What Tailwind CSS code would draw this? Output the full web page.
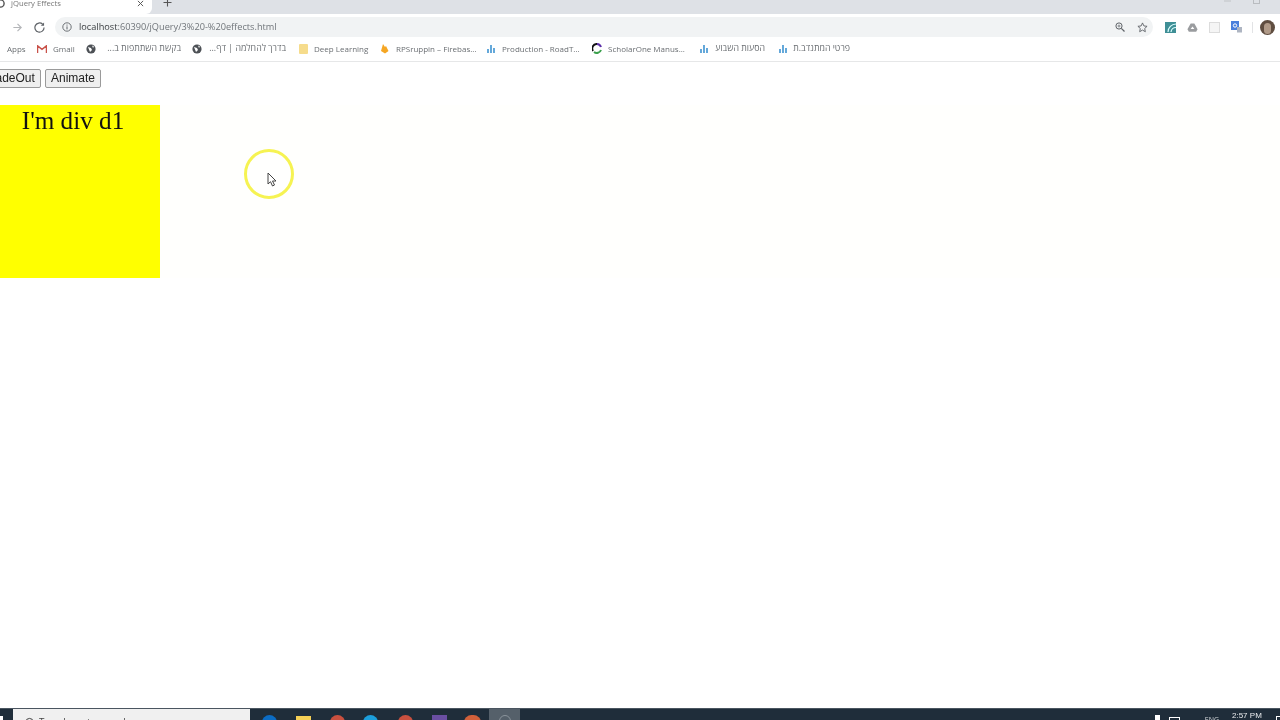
<!DOCTYPE html>
<html>
<head>
<meta charset="utf-8">
<script src="https://cdn.jsdelivr.net/npm/@tailwindcss/browser@4"></script>
</head>
<body class="bg-white">
<div class="relative w-[1280px] h-[720px] overflow-hidden flex flex-col bg-white blur-[0.35px] font-['Open_Sans','Noto_Sans',sans-serif]">

  <!-- tab strip -->
  <div class="h-[14px] shrink-0 bg-[#dee1e6] flex items-start overflow-hidden">
    <div class="w-[152px] h-[14px] bg-white rounded-br-md flex items-center relative shrink-0">
      <svg class="absolute left-[-4px] top-[-1px] w-[9px] h-[9px]" viewBox="0 0 10 10"><circle cx="5" cy="5" r="4" fill="none" stroke="#555" stroke-width="1.6"/></svg>
      <span class="ml-[11px] mt-[-8px] text-[7.7px] leading-[10px] text-[#777]">jQuery Effects</span>
      <svg class="absolute left-[137px] top-0 w-[7px] h-[7px]" viewBox="0 0 8 8"><path d="M1 1l6 6M7 1L1 7" stroke="#555" stroke-width="1.1"/></svg>
    </div>
    <svg class="ml-[11px] w-[9px] h-[9px] shrink-0 mt-[-2px]" viewBox="0 0 9 9"><path d="M4.500 0v8.500M.5 4.500h8" stroke="#555" stroke-width="1.1"/></svg>
    <div class="ml-auto flex gap-[22px] mr-[20px] items-start">
      <div class="w-[7px] h-[2px] bg-[#cfd2d6]"></div>
      <div class="w-[7px] h-[4px] border border-t-0 border-[#b9bcc0]"></div>
    </div>
  </div>

  <!-- toolbar -->
  <div class="h-[24px] shrink-0 bg-white flex items-center pt-[2px] relative">
    <svg class="ml-[12px] w-[11px] h-[11px] shrink-0" viewBox="0 0 12 12"><path d="M1.500 6H10M6 2l4 4-4 4" fill="none" stroke="#b4b6b9" stroke-width="1.3"/></svg>
    <svg class="ml-[11px] w-[11px] h-[11px] shrink-0" viewBox="0 0 12 12"><path d="M11 6A5 5 0 1 1 9.400 2.400" fill="none" stroke="#5f6368" stroke-width="1.3"/><path d="M11 .6v3.600H7.400z" fill="#5f6368"/></svg>
    <div class="ml-[10px] w-[1098px] h-[20px] rounded-full bg-[#f1f3f4] flex items-center shrink-0">
      <svg class="ml-[7px] w-[10px] h-[10px] shrink-0" viewBox="0 0 10 10"><circle cx="5" cy="5" r="4.200" fill="none" stroke="#5f6368" stroke-width=".9"/><path d="M5 4.400v3M5 2.600v1" stroke="#5f6368" stroke-width="1"/></svg>
      <span class="ml-[7px] text-[9.200px] leading-none text-[#3c4043]">localhost<span class="text-[#70757a]">:60390/jQuery/3%20-%20effects.html</span></span>
      <svg class="ml-auto w-[10px] h-[10px] shrink-0" viewBox="0 0 10 10"><circle cx="4" cy="4" r="3.100" fill="none" stroke="#5f6368" stroke-width="1"/><path d="M6.300 6.300L9.500 9.500" stroke="#5f6368" stroke-width="1.200"/><path d="M2.500 4h3M4 2.500v3" stroke="#5f6368" stroke-width=".7"/></svg>
      <svg class="ml-[12px] mr-[5px] w-[11px] h-[11px] shrink-0" viewBox="0 0 12 12"><path d="M6 1l1.500 3.300 3.500.4-2.600 2.400.7 3.500L6 8.800l-3.100 1.800.7-3.500L1 4.700l3.500-.4z" fill="none" stroke="#5f6368" stroke-width="1"/></svg>
    </div>
    <div class="ml-[12px] w-[11px] h-[11px] shrink-0 bg-[#3f8f96] overflow-hidden">
      <svg viewBox="0 0 11 11" class="w-[11px] h-[11px]"><path d="M11 2A8 8 0 0 0 3 10M11 5.500A5 5 0 0 0 6 10" fill="none" stroke="#dff" stroke-width="1.200"/></svg>
    </div>
    <svg class="ml-[11px] w-[11px] h-[11px] shrink-0" viewBox="0 0 12 12"><path d="M4 1.500h4L11.500 8 10 10.500H2L.5 8z" fill="#9a9c9f"/><path d="M6 5l2 2.500H4z" fill="#fff"/></svg>
    <div class="ml-[11px] w-[11px] h-[11px] shrink-0 bg-[#f5f5f5] border border-[#dcdcdc]"></div>
    <svg class="ml-[11px] w-[11px] h-[12px] shrink-0" viewBox="0 0 11 12"><rect x="0" y="0" width="8" height="9" fill="#4a7fdc"/><circle cx="4" cy="4.500" r="1.700" fill="none" stroke="#fff"/><rect x="6" y="6" width="5" height="5.500" fill="#aeb5c2"/></svg>
    <div class="ml-[10px] w-px h-[11px] bg-[#e2e3e5] shrink-0"></div>
    <div class="ml-[7px] w-[15px] h-[15px] rounded-full bg-[#5f4d40] shrink-0 overflow-hidden flex justify-center items-end">
      <div class="w-[7px] h-[11px] rounded-full bg-[#b09a88] mb-[1px]"></div>
    </div>
  </div>

  <!-- bookmarks -->
  <div class="h-[24px] shrink-0 bg-white border-b border-[#e6e7e8] flex items-center pb-[2px] text-[8px] leading-none text-[#6a6e72] whitespace-nowrap">
    <span class="ml-[7px] w-[30px] shrink-0">Apps</span>
    <svg class="w-[10px] h-[8px] shrink-0" viewBox="0 0 10 8"><path d="M.5 8V.8L5 4.400 9.500.8V8" fill="none" stroke="#c9524a" stroke-width="1.500"/></svg>
    <span class="ml-[6px] w-[21px] shrink-0">Gmail</span>
    <svg class="ml-[12px] w-[10px] h-[10px] shrink-0" viewBox="0 0 10 10"><circle cx="5" cy="5" r="4.600" fill="#4d5156"/><path d="M2 3l3 1 1 2-2 2zM6 1.500l2 1-1 1.500z" fill="#fff"/></svg>
    <span class="ml-[9px] w-[76px] shrink-0 text-[8.800px]" dir="rtl">בקשת השתתפות ב...</span>
    <svg class="ml-[11px] w-[10px] h-[10px] shrink-0" viewBox="0 0 10 10"><circle cx="5" cy="5" r="4.600" fill="#4d5156"/><path d="M2 3l3 1 1 2-2 2zM6 1.500l2 1-1 1.500z" fill="#fff"/></svg>
    <span class="ml-[11px] w-[73px] shrink-0 text-[8.800px]" dir="rtl">בדרך להחלמה | דף...</span>
    <div class="ml-[13px] w-[9px] h-[10px] bg-[#f6dc8c] rounded-[1px] shrink-0"></div>
    <span class="ml-[6px] w-[53px] shrink-0">Deep Learning</span>
    <svg class="ml-[13px] w-[9px] h-[11px] shrink-0" viewBox="0 0 9 11"><path d="M1 8l2-7 2 3 1-1 2.500 5-3.500 2.500z" fill="#f5a623"/></svg>
    <span class="ml-[7px] w-[78px] shrink-0">RPSruppin – Firebas...</span>
    <svg class="ml-[13px] w-[8px] h-[8px] shrink-0" viewBox="0 0 8 8"><path d="M1 4v4M4 0v8M7 3v5" stroke="#4a9ad4" stroke-width="1.700"/></svg>
    <span class="ml-[7px] w-[77px] shrink-0">Production - RoadT...</span>
    <svg class="ml-[13px] w-[10px] h-[11px] shrink-0" viewBox="0 0 10 11"><path d="M5 1a4.500 4.500 0 0 0-4 7" fill="none" stroke="#111" stroke-width="2"/><path d="M2 9a4.500 4.500 0 0 0 7-2" fill="none" stroke="#3ba14c" stroke-width="2"/><path d="M5 1a4.500 4.500 0 0 1 4 3" fill="none" stroke="#5b2fa8" stroke-width="2"/></svg>
    <span class="ml-[6px] w-[75px] shrink-0">ScholarOne Manus...</span>
    <svg class="ml-[17px] w-[8px] h-[8px] shrink-0" viewBox="0 0 8 8"><path d="M1 4v4M4 0v8M7 3v5" stroke="#4a9ad4" stroke-width="1.700"/></svg>
    <span class="ml-[7px] w-[50px] shrink-0 text-[8.800px]" dir="rtl">הסעות השבוע</span>
    <svg class="ml-[14px] w-[8px] h-[8px] shrink-0" viewBox="0 0 8 8"><path d="M1 4v4M4 0v8M7 3v5" stroke="#4a9ad4" stroke-width="1.700"/></svg>
    <span class="ml-[6px] w-[57px] shrink-0 text-[8.800px]" dir="rtl">פרטי המתנדב.ת</span>
  </div>

  <!-- page content -->
  <div class="flex-1 relative font-['Liberation_Sans',sans-serif]">
    <div class="flex gap-[4px] mt-[7px] ml-[-14px]">
      <button class="h-[19px] w-[55px] shrink-0 bg-[#efefef] border border-[#9a9a9a] rounded-[2px] text-[12px] leading-none text-[#222] pb-[1px]">fadeOut</button>
      <button class="h-[19px] w-[56px] shrink-0 bg-[#efefef] border border-[#9a9a9a] rounded-[2px] text-[12px] leading-none text-[#222] pb-[1px]">Animate</button>
    </div>
    <div class="flex mt-[17px] ml-[-14px]">
      <div class="w-[174px] h-[173px] shrink-0 bg-[#ffff00] text-center font-['Liberation_Serif',serif] text-[25.200px] leading-[32px] text-[#111]">I'm div d1</div>
      <div class="w-[1120px] h-[173px] shrink-0 bg-[#fffffd]"></div>
    </div>
  </div>

  <!-- taskbar -->
  <div class="h-[12px] shrink-0 bg-[#1f2d3a] border-t border-[#4a5560] flex items-start overflow-hidden text-white">
    <div class="w-[13px] shrink-0 relative"><div class="absolute left-0 top-[7px] w-[3px] h-[5px] bg-white"></div></div>
    <div class="w-[237px] h-[12px] bg-[#f0f0f0] shrink-0 flex items-start relative">
      <svg class="ml-[12px] mt-[8px] w-[9px] h-[10px]" viewBox="0 0 10 10"><circle cx="5" cy="5" r="4" fill="none" stroke="#333" stroke-width="1"/></svg>
      <span class="ml-[5px] mt-[8px] text-[9.800px] leading-none text-[#444]">Type here to search</span>
    </div>
    <div class="ml-[12px] mt-[6px] w-[15px] h-[15px] rounded-full bg-[#0b6cc4] shrink-0"></div>
    <div class="ml-[19px] mt-[7px] w-[15px] h-[10px] bg-[#f5cf56] shrink-0"></div>
    <div class="ml-[19px] mt-[6px] w-[15px] h-[15px] rounded-full bg-[#c9503f] shrink-0"></div>
    <div class="ml-[18px] mt-[6px] w-[15px] h-[15px] rounded-full bg-[#1c9fdc] shrink-0"></div>
    <div class="ml-[20px] mt-[6px] w-[15px] h-[15px] rounded-full bg-[#c9503f] shrink-0"></div>
    <div class="ml-[19px] mt-[6px] w-[15px] h-[10px] bg-[#6a4fa3] shrink-0"></div>
    <div class="ml-[17px] mt-[6px] w-[17px] h-[15px] rounded-full bg-[#d2603a] shrink-0"></div>
    <div class="ml-[8px] w-[31px] h-[12px] bg-[#55606a] shrink-0 flex justify-center">
      <div class="mt-[6px] w-[12px] h-[12px] rounded-full border border-[#8a939b]"></div>
    </div>
    <div class="ml-auto flex items-start shrink-0">
      <div class="mt-[6px] w-[5px] h-[5px] bg-white"></div>
      <div class="ml-[9px] mt-[8px] w-[11px] h-[6px] border border-white"></div>
      <span class="ml-[25px] mt-[7px] text-[7px] leading-none text-[#d5d8db]">ENG</span>
      <span class="ml-[13px] mt-[2px] w-[32px] text-[8px] leading-[10px] text-[#e8eaec] font-['Liberation_Sans',sans-serif]">2:57 PM</span>
      <div class="ml-[12px] mr-[-2px] mt-[7px] w-[6px] h-[6px] border border-white"></div>
    </div>
  </div>

  <!-- recording cursor highlight -->
  <div class="absolute left-[244px] top-[149px] w-[50px] h-[50px] rounded-full border-[3px] border-[#f6f352] bg-white/60"></div>
  <svg class="absolute left-[267px] top-[172px] w-[10px] h-[15px]" viewBox="0 0 10 15"><path d="M1 1v11l2.500-2.300L5.500 14l2-1-2-4H9z" fill="#fff" stroke="#444" stroke-width="1"/></svg>
</div>
</body>
</html>
